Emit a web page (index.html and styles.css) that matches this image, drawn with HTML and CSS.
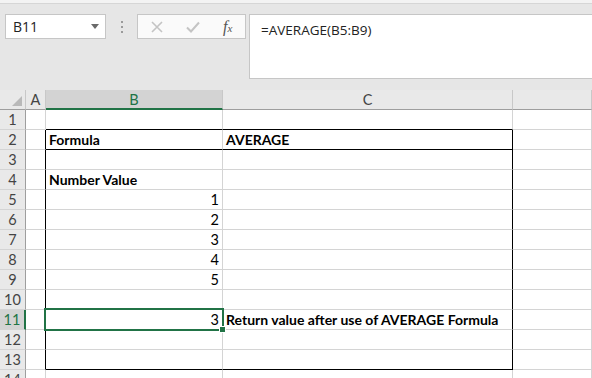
FILE: index.html
```html
<!DOCTYPE html>
<html lang="en">
<head>
  <meta charset="UTF-8">
  <title>AVERAGE Formula</title>
  <link rel="stylesheet" href="styles.css">
</head>
<body>
  <div class="ribbon"></div>

  <!-- name box + formula bar -->
  <div class="toolbar">
    <div class="name-box">
      <span>B11</span>
      <svg class="drop" width="8" height="5" viewBox="0 0 8 5"><path d="M0 0h8L4 5z" fill="#6a6a6a"/></svg>
    </div>
    <div class="grip"><i></i><i></i><i></i></div>
    <div class="fx-box">
      <svg width="12" height="12" viewBox="0 0 12 12"><path d="M1 1l10 10M11 1L1 11" stroke="#c4c4c4" stroke-width="1.6"/></svg>
      <svg width="14" height="12" viewBox="0 0 14 12"><path d="M1 6.5l4 4L13 1.5" stroke="#c4c4c4" stroke-width="2" fill="none"/></svg>
      <span class="fx">f<sub>x</sub></span>
    </div>
    <div class="formula">=AVERAGE(B5:B9)</div>
  </div>

  <div class="sheet">
    <div class="hd corner"><svg width="10" height="10" viewBox="0 0 10 10"><path d="M10 0v10H0z" fill="#b9b9b9"/></svg></div>
    <div class="hd">A</div>
    <div class="hd sel-col">B</div>
    <div class="hd">C</div>
    <div class="hd"></div>

    <div class="rh">1</div><div class="c"></div><div class="c top-b"></div><div class="c top-b"></div><div class="c"></div>
    <div class="rh">2</div><div class="c left-b"></div><div class="c bold bot-b">Formula</div><div class="c bold bot-b right-b">AVERAGE</div><div class="c"></div>
    <div class="rh">3</div><div class="c left-b"></div><div class="c"></div><div class="c right-b"></div><div class="c"></div>
    <div class="rh">4</div><div class="c left-b"></div><div class="c bold">Number Value</div><div class="c right-b"></div><div class="c"></div>
    <div class="rh">5</div><div class="c left-b"></div><div class="c num">1</div><div class="c right-b"></div><div class="c"></div>
    <div class="rh">6</div><div class="c left-b"></div><div class="c num">2</div><div class="c right-b"></div><div class="c"></div>
    <div class="rh">7</div><div class="c left-b"></div><div class="c num">3</div><div class="c right-b"></div><div class="c"></div>
    <div class="rh">8</div><div class="c left-b"></div><div class="c num">4</div><div class="c right-b"></div><div class="c"></div>
    <div class="rh">9</div><div class="c left-b"></div><div class="c num">5</div><div class="c right-b"></div><div class="c"></div>
    <div class="rh">10</div><div class="c left-b"></div><div class="c"></div><div class="c right-b"></div><div class="c"></div>
    <div class="rh sel-row">11</div><div class="c left-b"></div><div class="c num active">3</div><div class="c bold right-b">Return value after use of AVERAGE Formula</div><div class="c"></div>
    <div class="rh">12</div><div class="c left-b"></div><div class="c"></div><div class="c right-b"></div><div class="c"></div>
    <div class="rh">13</div><div class="c left-b"></div><div class="c bot-b"></div><div class="c bot-b right-b"></div><div class="c"></div>
    <div class="rh">14</div><div class="c"></div><div class="c"></div><div class="c"></div><div class="c"></div>
  </div>
</body>
</html>
```

FILE: styles.css
```css
body {
  margin: 0;
  background: #e6e6e6;
  font-family: "Open Sans", sans-serif;
  overflow: hidden;
}

.ribbon {
  height: 3px;
  background: #f3f3f3;
  border-bottom: 1px solid #d6d6d6;
}

.toolbar {
  height: 76px;
  padding-top: 10px;
  display: flex;
  align-items: flex-start;
}
.name-box {
  margin-left: 5px;
  width: 99px;
  height: 23px;
  background: #fff;
  border: 1px solid #c6c6c6;
  display: flex;
  align-items: center;
  font-size: 14px;
  color: #222;
}
.name-box span {
  padding-left: 7px;
  flex: 1;
}
.name-box .drop {
  margin-right: 6px;
}
.grip {
  width: 31px;
  height: 25px;
  display: flex;
  flex-direction: column;
  align-items: center;
  justify-content: center;
  gap: 3px;
}
.grip i {
  width: 2px;
  height: 2px;
  background: #9a9a9a;
}
.fx-box {
  width: 94px;
  height: 23px;
  background: #fafafa;
  border: 1px solid #c6c6c6;
  display: flex;
  align-items: center;
  padding-left: 13px;
  gap: 22px;
}
.fx-box svg:nth-child(2) {
  margin-left: 1px;
}
.fx {
  font-family: "Liberation Serif", serif;
  font-style: italic;
  font-size: 16px;
  color: #555;
  margin-left: 1px;
}
.fx sub {
  font-size: 11px;
  vertical-align: 0;
}
.formula {
  margin-left: 3px;
  flex: 1;
  height: 65px;
  background: #fff;
  border: 1px solid #c6c6c6;
  border-right: none;
  padding: 6px 0 0 11px;
  box-sizing: border-box;
  font-size: 13.5px;
  color: #222;
}

.sheet {
  display: grid;
  grid-template-columns: 26px 20px 177px 290px 1fr;
  grid-auto-rows: 20px;
  background: #fff;
  font-family: "Lato", sans-serif;
  font-size: 14px;
  color: #000;
}
.hd, .rh {
  background: #e9e9e9;
  color: #444;
  display: flex;
  align-items: center;
  justify-content: center;
  box-sizing: border-box;
  border-right: 1px solid #c8c8c8;
  border-bottom: 1px solid #c8c8c8;
  font-size: 14.5px;
}
.hd {
  border-bottom-color: #9e9e9e;
}
.corner {
  justify-content: flex-end;
  align-items: flex-end;
  padding: 0 3px 3px 0;
}
.sel-col {
  background: #d3d3d3;
  color: #217346;
  border-bottom: 2px solid #217346;
}
.rh {
  border-right-color: #9e9e9e;
  border-bottom-color: #d4d4d4;
}
.sel-row {
  background: #d3d3d3;
  color: #217346;
  border-right: 2px solid #217346;
}

.c {
  box-sizing: border-box;
  border-right: 1px solid #d4d4d4;
  border-bottom: 1px solid #d4d4d4;
  display: flex;
  align-items: flex-end;
  padding: 0 3px 1px;
  white-space: nowrap;
  min-width: 0;
}
.bold {
  font-weight: bold;
}
.num {
  justify-content: flex-end;
  font-size: 14.5px;
}
.top-b, .bot-b {
  border-bottom-color: #000;
}
.left-b, .right-b {
  border-right-color: #000;
}

.active {
  position: relative;
}
.active::after {
  content: "";
  position: absolute;
  left: -2px;
  top: -2px;
  right: -2px;
  bottom: -2px;
  border: 2px solid #217346;
}
.active::before {
  content: "";
  position: absolute;
  right: -4px;
  bottom: -4px;
  width: 5px;
  height: 5px;
  background: #217346;
  border: 1px solid #fff;
  z-index: 1;
}
```
